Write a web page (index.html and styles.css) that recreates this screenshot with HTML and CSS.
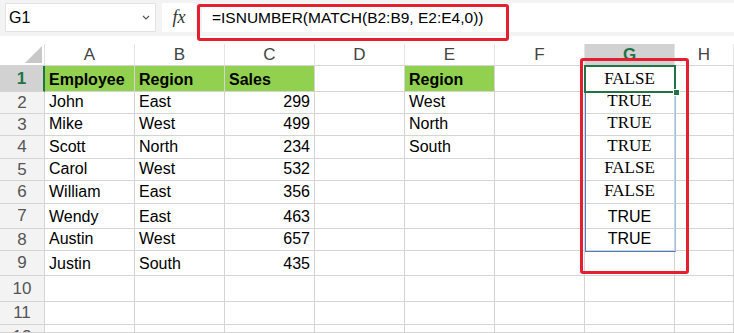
FILE: index.html
```html
<!DOCTYPE html>
<html lang="en">
  <head>
    <meta charset="UTF-8" />
    <meta name="viewport" content="width=device-width, initial-scale=1.0" />
    <title>ISNUMBER MATCH</title>

    <link rel="stylesheet" href="styles.css">
  </head>

  <body>
    <div class="bar">
      <div class="namebox">
        <span>G1</span>
        <svg class="chev" width="8" height="5" viewBox="0 0 8 5">
          <path d="M1 1 L4 4 L7 1" fill="none" stroke="#555" stroke-width="1.2" />
        </svg>
      </div>
      <div class="fx"><span>fx</span></div>
      <div class="formula">=ISNUMBER(MATCH(B2:B9, E2:E4,0))</div>
      <div class="ring ring-formula"></div>
    </div>

    <section class="sheet" id="sheet">
      <div class="range"></div>
      <div class="active"></div>
      <div class="handle"></div>
      <div class="ring ring-col"></div>
    </section>

    <script>
      const letters = ["A", "B", "C", "D", "E", "F", "G", "H"];
      const rows = [
        ["Employee", "Region", "Sales", "", "Region", "", "FALSE", ""],
        ["John", "East", "299", "", "West", "", "TRUE", ""],
        ["Mike", "West", "499", "", "North", "", "TRUE", ""],
        ["Scott", "North", "234", "", "South", "", "TRUE", ""],
        ["Carol", "West", "532", "", "", "", "FALSE", ""],
        ["William", "East", "356", "", "", "", "FALSE", ""],
        ["Wendy", "East", "463", "", "", "", "TRUE", ""],
        ["Austin", "West", "657", "", "", "", "TRUE", ""],
        ["Justin", "South", "435", "", "", "", "", ""],
        [],
        [],
        [],
      ];

      const sheet = document.querySelector("#sheet");

      function cell(text, cls) {
        const d = document.createElement("div");
        d.className = "c " + cls;
        d.textContent = text;
        sheet.appendChild(d);
        return d;
      }

      // top left corner
      cell("", "corner").innerHTML =
        '<svg width="45" height="21"><polygon points="25,19 42,19 42,2" fill="#c8c8c8"/></svg>';

      letters.forEach((l) => cell(l, l == "G" ? "colhead sel-head" : "colhead"));

      rows.forEach((row, r) => {
        let head = "rowhead";
        if (r == 0) head += " sel-head row-sel";
        if (r == rows.length - 1) head += " row-cut";
        cell(r + 1, head);
        for (let i = 0; i < 8; i++) {
          const t = row[i] || "";
          let cls = "";
          if (r == 0 && t && i != 6) cls = "green";
          if (i == 2 && r > 0) cls = "num";
          if (i == 6) cls = r >= 6 ? "bool sans" : "bool";
          cell(t, cls);
        }
      });
    </script>
  </body>
</html>
```

FILE: styles.css
```css
body {
  margin: 0;
  width: 734px;
  height: 333px;
  overflow: hidden;
  position: relative;
  background: #fff;
  font-family: "Liberation Sans", Arial, sans-serif;
  color: #000;
}

/* formula bar */
.bar {
  display: flex;
  gap: 6px;
  height: 36px;
  padding: 3px 0 0 5px;
  box-sizing: border-box;
  background: #f3f3f3;
}
.namebox {
  width: 151px;
  height: 29px;
  box-sizing: border-box;
  background: #fff;
  border: 1px solid #e3e3e3;
  display: flex;
  align-items: center;
  justify-content: space-between;
  padding: 0 5px 0 3px;
  font-size: 16px;
}
.fx {
  width: 34px;
  height: 29px;
  background: #fff;
  display: flex;
  align-items: center;
  justify-content: center;
  font-family: "Liberation Serif", serif;
  font-style: italic;
  font-size: 18px;
  color: #333;
}
.formula {
  flex: 1;
  height: 29px;
  background: #fff;
  display: flex;
  align-items: center;
  padding-left: 10px;
  font-size: 15.5px;
}

.ring {
  position: absolute;
  box-sizing: border-box;
  border: 3px solid #e3202f;
  border-radius: 3px;
  z-index: 3;
}
.ring-formula {
  left: 197px;
  top: 4px;
  width: 312px;
  height: 37px;
}
.ring-col {
  left: 580px;
  top: 14px;
  width: 109px;
  height: 216px;
}

/* grid */
.sheet {
  position: relative;
  margin-top: 8px;
  height: 289px;
  display: grid;
  grid-template-columns: 45px repeat(7, 90px) 1fr;
  grid-template-rows: 22px 26px 22px 22px 23px 22px 23px 25px 22px 25px 26px 23px 1fr;
}
.c {
  box-sizing: border-box;
  border-right: 1px solid #d4d4d4;
  border-bottom: 1px solid #d4d4d4;
  display: flex;
  align-items: flex-end;
  padding: 0 4px 2px;
  font-size: 16px;
  white-space: nowrap;
  overflow: hidden;
}
.corner {
  padding: 0;
  border-right-color: #e1e1e1;
}
.colhead {
  align-items: center;
  justify-content: center;
  padding: 0;
  color: #444;
  font-size: 17px;
  border-right-color: #e4e4e4;
}
.rowhead {
  align-items: center;
  justify-content: center;
  padding: 0;
  background: #f3f3f3;
  color: #555;
  font-size: 17px;
}
.row-cut {
  align-items: flex-start;
  padding-top: 3px;
  line-height: 1;
}
.sel-head {
  background: #d2d2d2;
  color: #217346;
  font-weight: bold;
}
.row-sel {
  border-right: 2px solid #217346;
}
.green {
  background: #92d050;
  font-weight: bold;
}
.num {
  justify-content: flex-end;
}
.bool {
  justify-content: center;
  font-family: "Liberation Serif", serif;
  font-size: 17px;
}
.bool.sans {
  font-family: "Liberation Sans", Arial, sans-serif;
  font-size: 16px;
}

/* selection */
.range {
  position: absolute;
  left: 585px;
  top: 48px;
  width: 91px;
  height: 160px;
  box-sizing: border-box;
  border: 1px solid #4f7cc0;
  border-right-color: #9dbbe8;
  z-index: 2;
}
.active {
  position: absolute;
  left: 584px;
  top: 21px;
  width: 92px;
  height: 28px;
  box-sizing: border-box;
  border: 2px solid #217346;
  z-index: 2;
}
.handle {
  position: absolute;
  left: 673px;
  top: 45px;
  width: 7px;
  height: 7px;
  box-sizing: border-box;
  background: #217346;
  border: 1px solid #fff;
  z-index: 2;
}
```
